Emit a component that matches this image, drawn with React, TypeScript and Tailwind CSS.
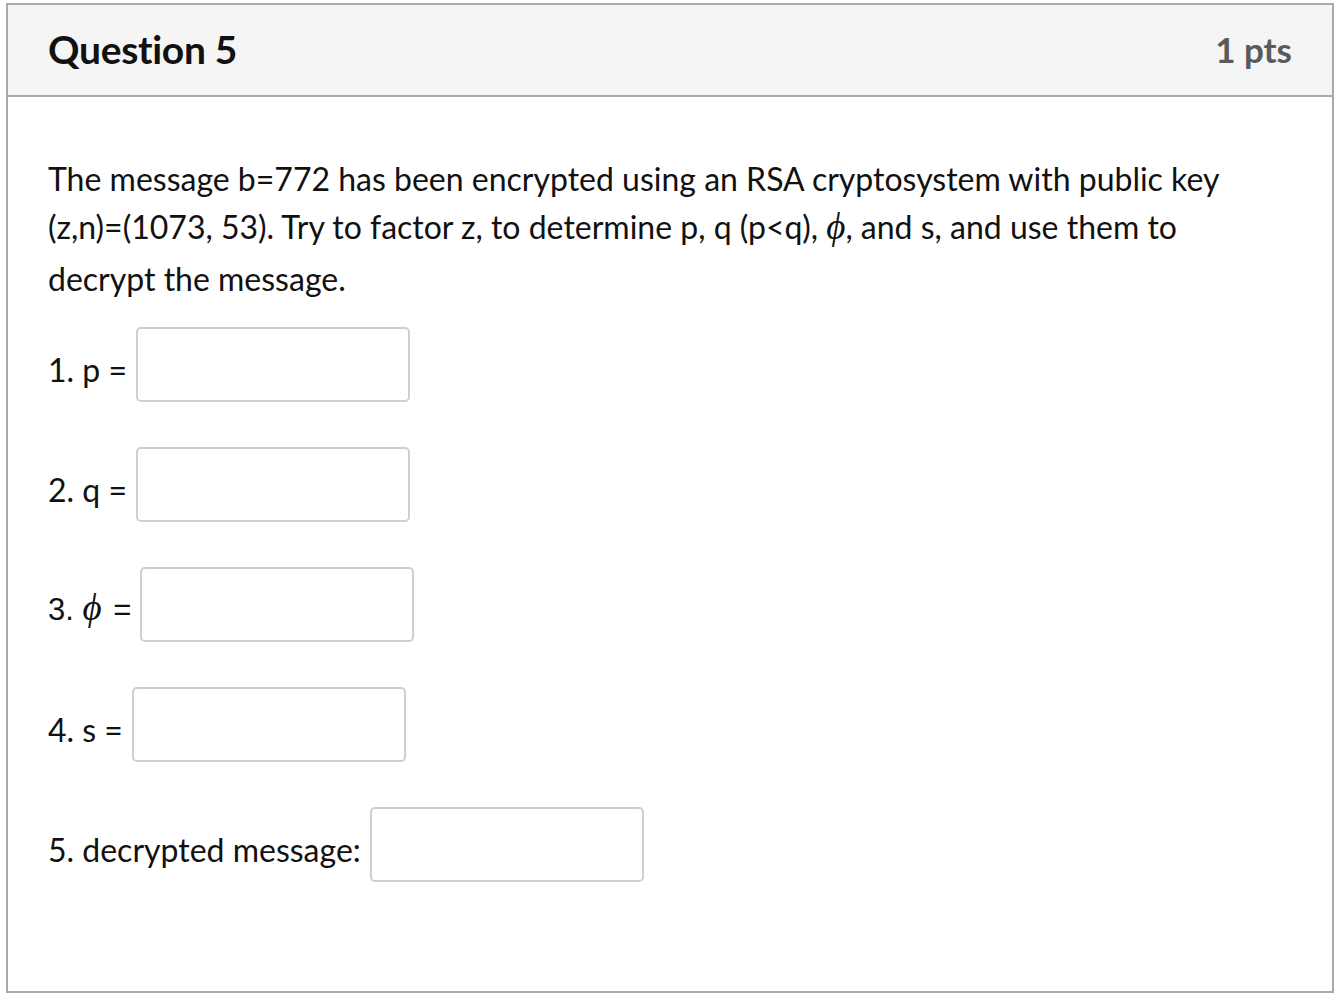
import React from "react";

const Phi = () => (
  <span
    className="italic text-[37px] leading-none"
    style={{ fontFamily: '"Liberation Serif", "DejaVu Serif", serif' }}
  >
    ϕ
  </span>
);

const Row = ({ label, mt, sans }: { label: React.ReactNode; mt: string; sans?: boolean }) => (
  <div className={`flex items-end gap-[9px] ${mt}`}>
    <span
      className="mb-[8px] leading-[48px]"
      style={sans ? { fontFamily: '"Liberation Sans", Arial, sans-serif', fontSize: "31px" } : undefined}
    >
      {label}
    </span>
    <div className="h-[75px] w-[274px] rounded-[5px] border-2 border-[#cfcfcf] bg-white" />
  </div>
);

export default function App() {
  return (
    <div
      className="min-h-[994px] bg-white pt-[3px] pl-[6px] pr-[4px] text-[#111]"
      style={{ fontFamily: 'Lato, "Open Sans", sans-serif' }}
    >
      <div className="h-[990px] border-2 border-[#aaaaaa] flex flex-col">
        <div className="h-[92px] bg-[#f5f5f5] border-b-2 border-[#aaaaaa] flex items-center justify-between pl-[40px] pr-[40px] pb-[1px]">
          <span className="text-[39px] font-bold tracking-[-0.3px]">Question 5</span>
          <span className="text-[35px] font-bold text-[#5a5a5a]">1 pts</span>
        </div>
        <div className="pl-[40px] pt-[58px] text-[32px]">
          <p className="leading-[48px] max-w-[1250px]">
            The message b=772 has been encrypted using an RSA cryptosystem with public key
            <br />
            (z,n)=(1073, 53). Try to factor z, to determine p, q (p&lt;q), <Phi />, and s, and use them to
            <br />
            <span className="inline-block mt-[4px]">decrypt the message.</span>
          </p>
          <Row label="1. p =" mt="mt-[24px]" />
          <Row label="2. q =" mt="mt-[45px]" />
          <Row
            sans
            label={
              <>
                3. <Phi />
                <span className="ml-[3px]"> =</span>
              </>
            }
            mt="mt-[45px]"
          />
          <Row label="4. s =" mt="mt-[45px]" />
          <Row label="5. decrypted message:" mt="mt-[45px]" />
        </div>
      </div>
    </div>
  );
}
